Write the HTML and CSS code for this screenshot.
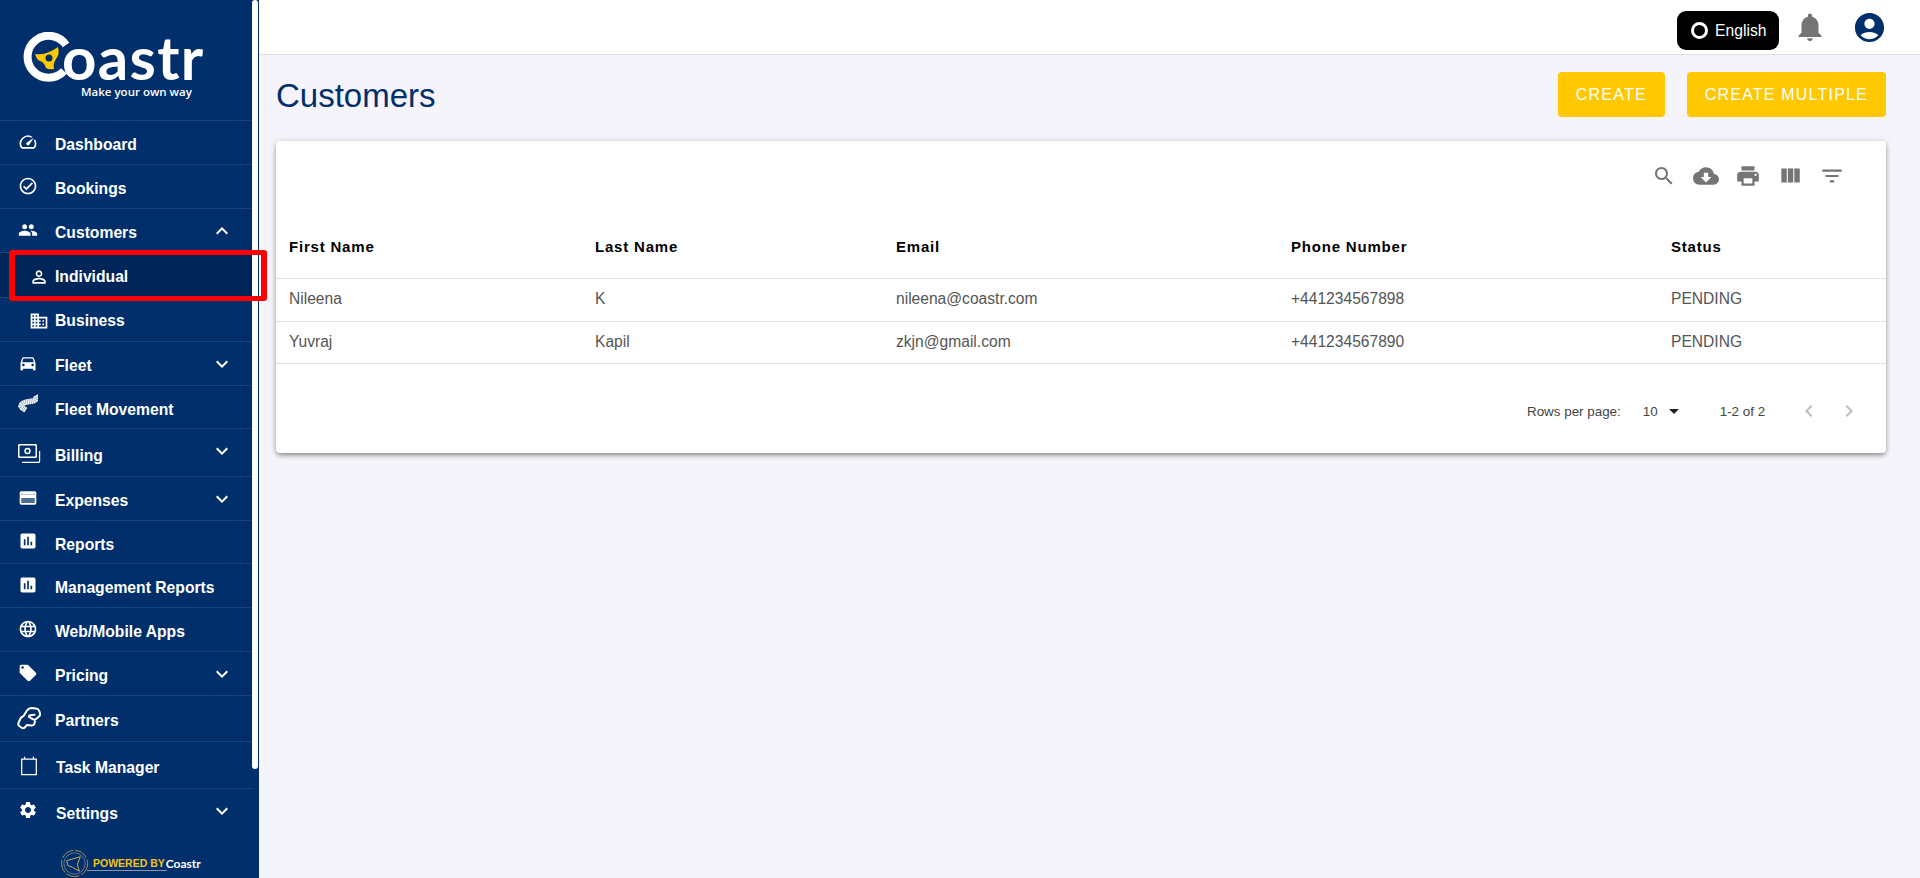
FILE: index.html
```html
<!DOCTYPE html>
<html lang="en">

<head>
  <meta charset="UTF-8">
  <meta name="viewport" content="width=device-width, initial-scale=1.0">
  <title>Customers</title>
  <link rel="stylesheet" href="styles.css">
</head>

<body>
  <svg class="defs" aria-hidden="true">
    <symbol id="i-speed" viewBox="0 0 24 24"><path d="M20.38 8.57l-1.23 1.85a8 8 0 0 1-.22 7.58H5.07A8 8 0 0 1 15.58 6.85l1.85-1.23A10 10 0 0 0 3.35 19a2 2 0 0 0 1.72 1h13.85a2 2 0 0 0 1.74-1 10 10 0 0 0-.27-10.44zm-9.79 6.84a2 2 0 0 0 2.83 0l5.66-8.49-8.49 5.66a2 2 0 0 0 0 2.83z"/></symbol>
    <symbol id="i-check" viewBox="0 0 24 24"><path d="M12 2C6.48 2 2 6.48 2 12s4.48 10 10 10 10-4.48 10-10S17.52 2 12 2zm0 18c-4.41 0-8-3.59-8-8s3.59-8 8-8 8 3.59 8 8-3.59 8-8 8zm4.59-12.42L10 14.17l-2.59-2.58L6 13l4 4 8-8z"/></symbol>
    <symbol id="i-people" viewBox="0 0 24 24"><path d="M16 11c1.66 0 2.99-1.34 2.99-3S17.66 5 16 5c-1.66 0-3 1.34-3 3s1.34 3 3 3zm-8 0c1.66 0 2.99-1.34 2.99-3S9.66 5 8 5C6.34 5 5 6.34 5 8s1.34 3 3 3zm0 2c-2.33 0-7 1.17-7 3.5V19h14v-2.5c0-2.33-4.67-3.5-7-3.5zm8 0c-.29 0-.62.02-.97.05 1.16.84 1.97 1.97 1.97 3.45V19h6v-2.5c0-2.33-4.67-3.5-7-3.5z"/></symbol>
    <symbol id="i-person" viewBox="0 0 24 24"><path d="M12 5.9c1.16 0 2.1.94 2.1 2.1s-.94 2.1-2.1 2.1S9.9 9.16 9.9 8s.94-2.1 2.1-2.1m0 9c2.97 0 6.1 1.46 6.1 2.1v1.1H5.9V17c0-.64 3.13-2.1 6.1-2.1M12 4C9.79 4 8 5.79 8 8s1.79 4 4 4 4-1.79 4-4-1.79-4-4-4zm0 9c-2.67 0-8 1.34-8 4v3h16v-3c0-2.66-5.33-4-8-4z"/></symbol>
    <symbol id="i-business" viewBox="0 0 24 24"><path d="M12 7V3H2v18h20V7H12zM6 19H4v-2h2v2zm0-4H4v-2h2v2zm0-4H4V9h2v2zm0-4H4V5h2v2zm4 12H8v-2h2v2zm0-4H8v-2h2v2zm0-4H8V9h2v2zm0-4H8V5h2v2zm10 12h-8v-2h2v-2h-2v-2h2v-2h-2V9h8v10zm-2-8h-2v2h2v-2zm0 4h-2v2h2v-2z"/></symbol>
    <symbol id="i-car" viewBox="0 0 24 24"><path d="M18.92 6.01C18.72 5.42 18.16 5 17.5 5h-11c-.66 0-1.21.42-1.42 1.01L3 12v8c0 .55.45 1 1 1h1c.55 0 1-.45 1-1v-1h12v1c0 .55.45 1 1 1h1c.55 0 1-.45 1-1v-8l-2.08-5.99zM6.5 16c-.83 0-1.5-.67-1.5-1.5S5.67 13 6.5 13s1.5.67 1.5 1.5S7.33 16 6.5 16zm11 0c-.83 0-1.5-.67-1.5-1.5s.67-1.5 1.5-1.5 1.5.67 1.5 1.5-.67 1.5-1.5 1.5zM5 11l1.5-4.5h11L19 11H5z"/></symbol>
    <symbol id="i-road" viewBox="0 0 24 24">
      <path d="M21 2c1.500 3 .5 5-2 6C15 9.500 9 8.500 5 12c-2 1.800-1.700 3.500 0 4.500l4.500 3" fill="none" stroke="currentColor" stroke-width="6.500" opacity=".6"/>
      <path d="M21 2c1.500 3 .5 5-2 6C15 9.500 9 8.500 5 12c-2 1.800-1.700 3.500 0 4.500l4.500 3" fill="none" stroke="currentColor" stroke-width="6.500" stroke-dasharray="1.200 1"/>
    </symbol>
    <symbol id="i-billing" viewBox="0 0 24 24"><path d="M2.500 2h16c.8 0 1.500.7 1.500 1.500v11c0 .8-.7 1.500-1.500 1.500h-16C1.700 16 1 15.300 1 14.500v-11C1 2.700 1.700 2 2.500 2zm.5 1.500c-.3 0-.5.2-.5.5v10c0 .3.2.5.5.5h15c.3 0 .5-.2.5-.5V4c0-.3-.2-.5-.5-.5H3zm7.500 2.300a3.200 3.200 0 1 1 0 6.400 3.200 3.200 0 0 1 0-6.400zm0 1.500a1.700 1.700 0 1 0 0 3.400 1.700 1.700 0 0 0 0-3.400zM22 9h1.200v10.500c0 .8-.7 1.500-1.500 1.500H5v-1.200h16.300c.4 0 .7-.3.7-.7V9z" fill-rule="evenodd"/></symbol>
    <symbol id="i-card" viewBox="0 0 24 24"><path d="M20 4H4c-1.110 0-1.990.89-1.990 2L2 18c0 1.110.89 2 2 2h16c1.110 0 2-.89 2-2V6c0-1.110-.89-2-2-2zm0 14H4v-6h16v6zm0-10H4V6h16v2z"/><rect x="4" y="12" width="16" height="6" opacity=".3"/><rect x="4" y="6" width="16" height="2"/></symbol>
    <symbol id="i-chart" viewBox="0 0 24 24"><path d="M19 3H5c-1.100 0-2 .9-2 2v14c0 1.100.9 2 2 2h14c1.100 0 2-.9 2-2V5c0-1.100-.9-2-2-2zM9 17H7v-7h2v7zm4 0h-2V7h2v10zm4 0h-2v-4h2v4z"/></symbol>
    <symbol id="i-globe" viewBox="0 0 24 24"><path d="M11.990 2C6.470 2 2 6.480 2 12s4.470 10 9.990 10C17.520 22 22 17.520 22 12S17.520 2 11.990 2zm6.930 6h-2.950c-.32-1.250-.78-2.450-1.380-3.560 1.840.63 3.370 1.910 4.330 3.560zM12 4.040c.83 1.200 1.480 2.530 1.910 3.960h-3.820c.43-1.430 1.080-2.760 1.910-3.960zM4.260 14C4.100 13.360 4 12.690 4 12s.1-1.360.26-2h3.380c-.08.66-.14 1.320-.14 2 0 .68.06 1.340.14 2H4.260zm.82 2h2.950c.32 1.250.78 2.450 1.380 3.560-1.840-.63-3.370-1.900-4.330-3.560zm2.950-8H5.080c.96-1.660 2.490-2.930 4.330-3.560C8.810 5.550 8.350 6.750 8.030 8zM12 19.960c-.83-1.200-1.480-2.530-1.910-3.960h3.820c-.43 1.430-1.080 2.760-1.910 3.960zM14.340 14H9.660c-.09-.66-.16-1.320-.16-2 0-.68.07-1.350.16-2h4.680c.09.65.16 1.320.16 2 0 .68-.07 1.340-.16 2zm.25 5.560c.6-1.110 1.060-2.310 1.380-3.560h2.950c-.96 1.650-2.490 2.930-4.330 3.560zM16.360 14c.08-.66.14-1.320.14-2 0-.68-.06-1.340-.14-2h3.380c.16.64.26 1.310.26 2s-.1 1.360-.26 2h-3.380z"/></symbol>
    <symbol id="i-tag" viewBox="0 0 24 24"><path d="M21.410 11.580l-9-9C12.050 2.220 11.550 2 11 2H4c-1.100 0-2 .9-2 2v7c0 .55.22 1.050.59 1.420l9 9c.36.36.86.58 1.410.58.55 0 1.050-.22 1.410-.59l7-7c.37-.36.59-.86.59-1.410 0-.55-.23-1.060-.59-1.420zM5.500 7C4.670 7 4 6.330 4 5.500S4.670 4 5.500 4 7 4.670 7 5.500 6.330 7 5.500 7z"/></symbol>
    <symbol id="i-hands" viewBox="0 0 24 24"><path d="M6.500 10L10 4.500C11 3 12.500 2 14.500 2l4.500.5c1.500.2 2.800 1 3.300 2.500l.7 2.500c.3 1.200-.1 2.300-1 3l-3 2.500c-1 .8-2.300.8-3.300.2l-3.200-2c-.9-.6-.5-1.900.6-2l4.400-.5M6.500 10c-1.500.5-2.500 1.500-3.300 3L1.500 17c-.6 1.300-.3 2.300.7 3l2.500 1.800c1 .7 2.100.6 3-.3l2.300-2.500 4.500.5c1.300.1 2.300-.5 2.800-1.700l.7-2.300" fill="none" stroke="currentColor" stroke-width="2" stroke-linejoin="round" stroke-linecap="round"/></symbol>
    <symbol id="i-calendar" viewBox="0 0 24 24"><path d="M2.500 3H6V1h1.500v2h9V1H18v2h3.500v20h-19V3zM4 4.500v17h16v-17H4z"/></symbol>
    <symbol id="i-gear" viewBox="0 0 24 24"><path d="M19.140 12.940c.04-.3.06-.61.06-.94 0-.32-.02-.64-.07-.94l2.030-1.580c.18-.14.23-.41.12-.61l-1.920-3.320c-.12-.22-.37-.29-.59-.22l-2.390.96c-.5-.38-1.030-.7-1.620-.94l-.36-2.540c-.04-.24-.24-.41-.48-.41h-3.840c-.24 0-.43.17-.47.41l-.36 2.540c-.59.24-1.130.57-1.620.94l-2.390-.96c-.22-.08-.47 0-.59.22L2.740 8.870c-.12.21-.08.47.12.61l2.030 1.580c-.05.3-.09.63-.09.94s.02.64.07.94l-2.030 1.580c-.18.14-.23.41-.12.61l1.920 3.320c.12.22.37.29.59.22l2.390-.96c.5.38 1.030.7 1.620.94l.36 2.540c.05.24.24.41.48.41h3.840c.24 0 .44-.17.47-.41l.36-2.540c.59-.24 1.130-.56 1.620-.94l2.390.96c.22.08.47 0 .59-.22l1.920-3.320c.12-.22.07-.47-.12-.61l-2.010-1.580zM12 15.600c-1.980 0-3.600-1.620-3.600-3.600s1.620-3.600 3.600-3.600 3.600 1.620 3.600 3.600-1.620 3.600-3.600 3.600z"/></symbol>
    <symbol id="i-down" viewBox="0 0 24 24"><path d="M16.590 8.590L12 13.170 7.410 8.590 6 10l6 6 6-6z"/></symbol>
    <symbol id="i-up" viewBox="0 0 24 24"><path d="M12 8l-6 6 1.410 1.410L12 10.830l4.590 4.580L18 14z"/></symbol>
    <symbol id="i-bell" viewBox="0 0 24 24"><path d="M12 22c1.100 0 2-.9 2-2h-4c0 1.100.9 2 2 2zm6-6v-5c0-3.070-1.630-5.640-4.500-6.320V4c0-.83-.67-1.500-1.500-1.500s-1.500.67-1.500 1.500v.68C7.640 5.360 6 7.920 6 11v5l-2 2v1h16v-1l-2-2z"/></symbol>
    <symbol id="i-account" viewBox="0 0 24 24"><path d="M12 2C6.480 2 2 6.480 2 12s4.480 10 10 10 10-4.480 10-10S17.520 2 12 2zm0 4c1.930 0 3.500 1.570 3.500 3.500S13.930 13 12 13s-3.500-1.570-3.500-3.500S10.070 6 12 6zm0 14c-2.030 0-4.430-.82-6.140-2.880C7.550 15.800 9.680 15 12 15s4.450.8 6.140 2.120C16.430 19.180 14.030 20 12 20z"/></symbol>
    <symbol id="i-search" viewBox="0 0 24 24"><path d="M15.500 14h-.79l-.28-.27C15.410 12.590 16 11.110 16 9.500 16 5.910 13.090 3 9.500 3S3 5.910 3 9.500 5.910 16 9.500 16c1.610 0 3.090-.59 4.230-1.570l.27.28v.79l5 4.990L20.490 19l-4.990-5zm-6 0C7.010 14 5 11.990 5 9.500S7.010 5 9.500 5 14 7.010 14 9.500 11.990 14 9.500 14z"/></symbol>
    <symbol id="i-cloud" viewBox="0 0 24 24"><path d="M19.350 10.040C18.670 6.590 15.640 4 12 4 9.110 4 6.600 5.640 5.350 8.040 2.340 8.360 0 10.910 0 14c0 3.310 2.690 6 6 6h13c2.760 0 5-2.240 5-5 0-2.640-2.050-4.780-4.650-4.960zM17 13l-5 5-5-5h3V9h4v4h3z"/></symbol>
    <symbol id="i-print" viewBox="0 0 24 24"><path d="M19 8H5c-1.660 0-3 1.340-3 3v6h4v4h12v-4h4v-6c0-1.660-1.340-3-3-3zm-3 11H8v-5h8v5zm3-7c-.55 0-1-.45-1-1s.45-1 1-1 1 .45 1 1-.45 1-1 1zm-1-9H6v4h12V3z"/></symbol>
    <symbol id="i-columns" viewBox="0 0 24 24"><path d="M10 18h5V5h-5v13zm-6 0h5V5H4v13zM16 5v13h5V5h-5z"/></symbol>
    <symbol id="i-filter" viewBox="0 0 24 24"><path d="M10 18h4v-2h-4v2zM3 6v2h18V6H3zm3 7h12v-2H6v2z"/></symbol>
    <symbol id="i-left" viewBox="0 0 24 24"><path d="M15.410 7.410L14 6l-6 6 6 6 1.410-1.410L10.830 12z"/></symbol>
    <symbol id="i-right" viewBox="0 0 24 24"><path d="M10 6L8.590 7.410 13.170 12l-4.580 4.590L10 18l6-6z"/></symbol>
    <symbol id="i-drop" viewBox="0 0 24 24"><path d="M7 10l5 5 5-5z"/></symbol>
  </svg>

  <div class="app">
    <aside class="sidebar">
      <div class="sidebar-inner">
        <div class="logo">
          <div class="logo-mark">
            <svg class="logo-c" viewBox="0 0 50 50">
              <path d="M43 13A21 21 0 1 0 41 39" fill="none" stroke="#fff" stroke-width="8" />
              <path d="M12 22Q20 23 26 20Q31 18 35 15Q37 22 33 27Q30 31 31 37Q26 38 23 36Q21 30 17 29Q14 28 12 22z" fill="#ffc800" />
              <circle cx="26" cy="26" r="3.500" fill="#002f6c" />
            </svg>
            <span class="logo-word">oastr</span>
          </div>
          <div class="logo-tag">Make your own way</div>
        </div>

        <nav class="menu">
          <a class="item"><svg class="icon"><use href="#i-speed" /></svg><span class="label">Dashboard</span></a>
          <a class="item"><svg class="icon"><use href="#i-check" /></svg><span class="label">Bookings</span></a>
          <a class="item"><svg class="icon"><use href="#i-people" /></svg><span class="label">Customers</span><svg class="caret"><use href="#i-up" /></svg></a>
          <a class="item sub active"><svg class="icon"><use href="#i-person" /></svg><span class="label">Individual</span><span class="highlight"></span></a>
          <a class="item sub"><svg class="icon"><use href="#i-business" /></svg><span class="label">Business</span></a>
          <a class="item"><svg class="icon"><use href="#i-car" /></svg><span class="label">Fleet</span><svg class="caret"><use href="#i-down" /></svg></a>
          <a class="item short"><svg class="icon icon-road"><use href="#i-road" /></svg><span class="label">Fleet Movement</span></a>
          <a class="item tall"><svg class="icon icon-wide"><use href="#i-billing" /></svg><span class="label">Billing</span><svg class="caret"><use href="#i-down" /></svg></a>
          <a class="item"><svg class="icon"><use href="#i-card" /></svg><span class="label">Expenses</span><svg class="caret"><use href="#i-down" /></svg></a>
          <a class="item short"><svg class="icon"><use href="#i-chart" /></svg><span class="label">Reports</span></a>
          <a class="item"><svg class="icon"><use href="#i-chart" /></svg><span class="label">Management Reports</span></a>
          <a class="item"><svg class="icon"><use href="#i-globe" /></svg><span class="label">Web/Mobile Apps</span></a>
          <a class="item"><svg class="icon"><use href="#i-tag" /></svg><span class="label">Pricing</span><svg class="caret"><use href="#i-down" /></svg></a>
          <a class="item large"><svg class="icon icon-wide"><use href="#i-hands" /></svg><span class="label">Partners</span></a>
          <a class="item larger"><svg class="icon"><use href="#i-calendar" /></svg><span class="label label-task">Task Manager</span></a>
          <a class="item plain"><svg class="icon"><use href="#i-gear" /></svg><span class="label label-task">Settings</span><svg class="caret"><use href="#i-down" /></svg></a>
        </nav>

        <div class="powered">
          <svg class="powered-mark" viewBox="0 0 30 30">
            <circle cx="15" cy="15" r="13.500" fill="none" stroke="#a8923f" stroke-width="1" stroke-dasharray="14 2" />
            <circle cx="15" cy="15" r="11" fill="none" stroke="#7f8aa0" stroke-width=".8" />
            <path d="M7 12l14-4-3 8 2 7-7-4-5-2z" fill="none" stroke="#c8b25a" stroke-width="1" />
          </svg>
          <span class="powered-text">POWERED BY</span>
          <span class="powered-logo">Coastr</span>
        </div>
      </div>
      <div class="scroll-track"><div class="scroll-thumb"></div></div>
    </aside>

    <div class="main">
      <header class="topbar">
        <div class="lang"><span class="lang-dot"></span>English</div>
        <svg class="bell"><use href="#i-bell" /></svg>
        <svg class="account"><use href="#i-account" /></svg>
      </header>

      <div class="content">
        <div class="page-head">
          <h1>Customers</h1>
          <div class="actions">
            <button class="btn">CREATE</button>
            <button class="btn">CREATE MULTIPLE</button>
          </div>
        </div>

        <div class="card">
          <div class="toolbar">
            <svg class="tool tool-search"><use href="#i-search" /></svg>
            <svg class="tool"><use href="#i-cloud" /></svg>
            <svg class="tool"><use href="#i-print" /></svg>
            <svg class="tool"><use href="#i-columns" /></svg>
            <svg class="tool"><use href="#i-filter" /></svg>
          </div>

          <table class="table">
            <thead>
              <tr>
                <th class="col-first">First Name</th>
                <th class="col-last">Last Name</th>
                <th class="col-email">Email</th>
                <th class="col-phone">Phone Number</th>
                <th>Status</th>
              </tr>
            </thead>
            <tbody>
              <tr>
                <td>Nileena</td>
                <td>K</td>
                <td>nileena@coastr.com</td>
                <td>+441234567898</td>
                <td>PENDING</td>
              </tr>
              <tr>
                <td>Yuvraj</td>
                <td>Kapil</td>
                <td>zkjn@gmail.com</td>
                <td>+441234567890</td>
                <td>PENDING</td>
              </tr>
            </tbody>
          </table>

          <div class="pager">
            <span>Rows per page:</span>
            <span class="rows">10<svg class="drop"><use href="#i-drop" /></svg></span>
            <span class="range">1-2 of 2</span>
            <svg class="page-arrow"><use href="#i-left" /></svg>
            <svg class="page-arrow"><use href="#i-right" /></svg>
          </div>
        </div>
      </div>
    </div>
  </div>
</body>

</html>
```

FILE: styles.css
```css
html,
body {
  margin: 0;
  height: 100%;
  overflow: hidden;
  font-family: "Liberation Sans", Arial, sans-serif;
}

.defs {
  display: none;
}

.app {
  display: flex;
  height: 878px;
  background-color: #f4f4fa;
}

/* sidebar */
.sidebar {
  display: flex;
  flex: none;
  width: 259px;
  background-color: #002f6c;
}

.sidebar-inner {
  display: flex;
  flex-direction: column;
  width: 252px;
}

.scroll-track {
  width: 7px;
}

.scroll-thumb {
  width: 6px;
  height: 769px;
  border-radius: 3px;
  background-color: #fff;
}

.logo {
  box-sizing: border-box;
  height: 121px;
  padding: 32px 0 0 23px;
  border-bottom: 1px solid #1a4378;
}

.logo-mark {
  display: flex;
  align-items: flex-end;
  height: 50px;
}

.logo-c {
  flex: none;
  width: 50px;
  height: 50px;
}

.logo-word {
  margin: 0 0 3px -11px;
  color: #fff;
  font-family: Lato, sans-serif;
  font-size: 60px;
  font-weight: 700;
  line-height: 44px;
  letter-spacing: 1.300px;
}

.logo-tag {
  margin: 2px 0 0 58px;
  color: #fff;
  font-family: "Open Sans", sans-serif;
  font-size: 11.500px;
  font-weight: 600;
}

.item {
  position: relative;
  display: flex;
  align-items: center;
  box-sizing: border-box;
  height: 44px;
  padding-left: 18px;
  border-bottom: 1px solid #1a4378;
  color: #fff;
}

.item.short {
  height: 43px;
}

.item.tall {
  height: 48px;
}

.item.large {
  height: 46px;
}

.item.larger {
  height: 47px;
}

.item.plain {
  border-bottom: none;
}

.item.sub {
  padding-left: 29px;
}

.item.active {
  height: 45px;
  background-color: #002659;
}

.icon {
  flex: none;
  width: 20px;
  height: 20px;
  margin: -2px 17px 0 0;
  fill: currentColor;
}

.icon-road {
  margin-top: -6px;
}

.icon-wide {
  width: 24px;
  height: 24px;
  margin: -1px 14px 0 -1px;
}

.tall .icon {
  margin-top: 2px;
}

.tall .label {
  margin-top: 7px;
}

.larger .icon {
  margin: 2px 16px 0 1px;
}

.sub .icon {
  margin: 3px 6px 0 0;
}

.label {
  margin-top: 5px;
  font-size: 15.700px;
  font-weight: bold;
}

.sub .label {
  margin-top: 3px;
}

.label-task {
  margin-left: 1px;
}

.caret {
  position: absolute;
  top: 10px;
  right: 18px;
  width: 24px;
  height: 24px;
  fill: currentColor;
}

/* red annotation round the current page */
.highlight {
  position: absolute;
  top: -3px;
  left: 9px;
  width: 246px;
  height: 41px;
  border-style: solid;
  border-color: #f00;
  border-width: 5px 6px;
  border-radius: 3px;
}

.powered {
  display: flex;
  align-items: center;
  margin: 16px 0 0 60px;
}

.powered-mark {
  flex: none;
  width: 29px;
  height: 29px;
  margin-right: -2px;
}

.powered-text {
  padding: 0 2px 1px 6px;
  border-bottom: 1px solid #8795ad;
  color: #f5c518;
  font-size: 10.500px;
  font-weight: bold;
}

.powered-logo {
  margin-left: -1px;
  color: #fff;
  font-family: Lato, sans-serif;
  font-size: 12px;
  font-weight: 700;
}

/* main area */
.main {
  flex: 1;
  min-width: 0;
}

.topbar {
  display: flex;
  align-items: center;
  justify-content: flex-end;
  box-sizing: border-box;
  height: 55px;
  padding-right: 33px;
  border-bottom: 1px solid #e0e0e0;
  background-color: #fff;
}

.lang {
  display: flex;
  align-items: center;
  box-sizing: border-box;
  width: 102px;
  height: 39px;
  margin-top: 7px;
  padding-left: 14px;
  border-radius: 9px;
  background-color: #000;
  color: #fff;
  font-size: 15.700px;
}

.lang-dot {
  box-sizing: border-box;
  width: 17px;
  height: 17px;
  margin-right: 7px;
  border: 3px solid #fff;
  border-radius: 50%;
}

.bell {
  width: 34px;
  height: 34px;
  margin-left: 14px;
  fill: #757575;
}

.account {
  width: 35px;
  height: 35px;
  margin-left: 25px;
  fill: #002f6c;
}

.content {
  padding: 17px 34px 0 17px;
}

.page-head {
  display: flex;
  align-items: center;
  justify-content: space-between;
  height: 45px;
}

h1 {
  margin: 2px 0 0;
  color: #002f6c;
  font-size: 33px;
  font-weight: normal;
}

.actions {
  display: flex;
  gap: 22px;
}

.btn {
  height: 45px;
  padding: 0 18px;
  border: none;
  border-radius: 4px;
  background-color: #ffc800;
  color: #fff;
  font-family: inherit;
  font-size: 16px;
  letter-spacing: 1.200px;
}

.card {
  margin-top: 24px;
  border-radius: 4px;
  background-color: #fff;
  box-shadow: 0 3px 5px -1px rgba(0, 0, 0, .35), 0 1px 6px 0 rgba(0, 0, 0, .2);
}

.toolbar {
  display: flex;
  align-items: center;
  justify-content: flex-end;
  gap: 16px;
  box-sizing: border-box;
  height: 57px;
  padding: 13px 41px 0 0;
}

.tool {
  width: 26px;
  height: 26px;
  fill: #757575;
}

.tool-search {
  width: 24px;
  height: 24px;
  margin-right: 1px;
}

.table {
  width: 100%;
  border-collapse: collapse;
  font-size: 15.600px;
  table-layout: fixed;
}

.table th {
  height: 63px;
  padding: 17px 13px 0;
  border-bottom: 1px solid #e0e0e0;
  color: #000;
  font-size: 15px;
  text-align: left;
  letter-spacing: .8px;
}

.table td {
  height: 40px;
  padding: 0 13px 2px;
  border-bottom: 1px solid #e0e0e0;
  color: #555;
}

.table tr:last-child td {
  height: 39px;
}

.col-first {
  width: 280px;
}

.col-last {
  width: 275px;
}

.col-email {
  width: 369px;
}

.col-phone {
  width: 354px;
}

.pager {
  display: flex;
  align-items: center;
  box-sizing: border-box;
  height: 89px;
  padding: 5px 0 0 1251px;
  color: #444;
  font-size: 13.400px;
}

.rows {
  display: flex;
  align-items: center;
  margin-left: 22px;
}

.drop {
  width: 24px;
  height: 24px;
  margin-left: 4px;
  fill: #222;
}

.range {
  margin: 0 32px 0 34px;
}

.page-arrow {
  width: 24px;
  height: 24px;
  margin-right: 16px;
  fill: #bdbdbd;
}
```
